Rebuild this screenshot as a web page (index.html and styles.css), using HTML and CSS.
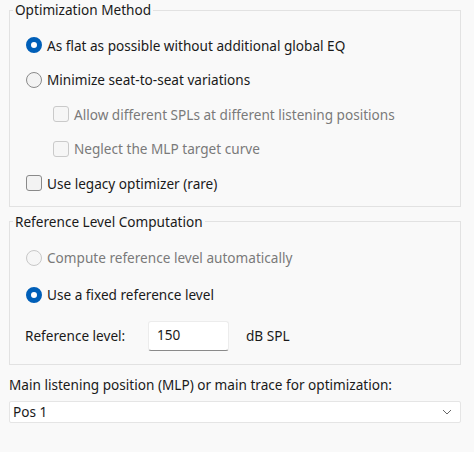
FILE: index.html
```html
<!DOCTYPE html>
<html lang="en">
<head>
    <meta charset="UTF-8">
    <title>Optimization</title>
    <link rel="stylesheet" href="styles.css">
</head>
<body>
    <fieldset class="group first">
        <legend>Optimization Method</legend>
        <div class="row">
            <span class="radio checked"></span>
            <span>As flat as possible without additional global EQ</span>
        </div>
        <div class="row">
            <span class="radio"></span>
            <span>Minimize seat-to-seat variations</span>
        </div>
        <div class="row sub disabled">
            <span class="check"></span>
            <span>Allow different SPLs at different listening positions</span>
        </div>
        <div class="row sub disabled">
            <span class="check"></span>
            <span>Neglect the MLP target curve</span>
        </div>
        <div class="row">
            <span class="check"></span>
            <span>Use legacy optimizer (rare)</span>
        </div>
    </fieldset>

    <fieldset class="group second">
        <legend>Reference Level Computation</legend>
        <div class="row disabled r1">
            <span class="radio"></span>
            <span>Compute reference level automatically</span>
        </div>
        <div class="row r2">
            <span class="radio checked"></span>
            <span>Use a fixed reference level</span>
        </div>
        <div class="level">
            <span class="level-label">Reference level:</span>
            <div class="input">150</div>
            <span class="unit">dB SPL</span>
        </div>
    </fieldset>

    <div class="mlp-label">Main listening position (MLP) or main trace for optimization:</div>
    <div class="combo">
        <span>Pos 1</span>
        <svg width="10" height="6" viewBox="0 0 10 6"><path d="M1 1 L5 5 L9 1" fill="none" stroke="#666" stroke-width="1"/></svg>
    </div>
</body>
</html>
```

FILE: styles.css
```css
* {
    box-sizing: border-box;
}

body {
    margin: 0;
    padding: 0 0 0 9px;
    width: 474px;
    height: 452px;
    background-color: #f9f9f9;
    font-family: 'Noto Sans', sans-serif;
    font-size: 13.6px;
    color: #1a1a1a;
}

.group {
    width: 452px;
    margin: 0;
    padding: 8px 0 5px 0;
    border: 1px solid #e2e2e2;
    border-radius: 0;
}

.group legend {
    margin-left: 3px;
    padding: 0 2px;
    height: 20px;
    line-height: 20px;
}

.second {
    margin-top: 5px;
    padding-top: 9px;
    padding-bottom: 7px;
}

.row {
    display: flex;
    align-items: center;
    height: 34.5px;
    padding-left: 16px;
}

.row.sub {
    padding-left: 43px;
}

.r1 {
    height: 34px;
}

.r2 {
    height: 40px;
}

.disabled {
    color: #7a7a7a;
}

.radio {
    width: 16px;
    height: 16px;
    margin-right: 5px;
    border: 1px solid #8a8a8a;
    border-radius: 50%;
    background-color: #f3f3f3;
    flex-shrink: 0;
}

.disabled .radio {
    border-color: #c8c8c8;
    background-color: #f6f6f6;
}

.radio.checked {
    border: 5px solid #005fb8;
    background-color: #fff;
}

.check {
    width: 16px;
    height: 16px;
    margin-right: 5px;
    border: 1px solid #8a8a8a;
    border-radius: 3px;
    background-color: #f3f3f3;
    flex-shrink: 0;
}

.disabled .check {
    border-color: #cacaca;
    background-color: #f6f6f6;
}

.level {
    display: flex;
    align-items: center;
    height: 42px;
    padding-left: 15px;
}

.level-label {
    width: 123px;
}

.input {
    width: 81px;
    height: 30px;
    padding: 3px 0 0 8px;
    background-color: #fff;
    border: 1px solid #ececec;
    border-bottom-color: #8a8a8a;
    border-radius: 3px;
}

.unit {
    margin-left: 17px;
}

.mlp-label {
    margin-top: 10px;
    height: 20px;
    line-height: 20px;
}

.combo {
    display: flex;
    align-items: center;
    justify-content: space-between;
    width: 452px;
    height: 22px;
    margin-top: 6px;
    padding: 0 8px 0 3px;
    background-color: #fff;
    border: 1px solid #e5e5e5;
    border-radius: 2px;
}
```
